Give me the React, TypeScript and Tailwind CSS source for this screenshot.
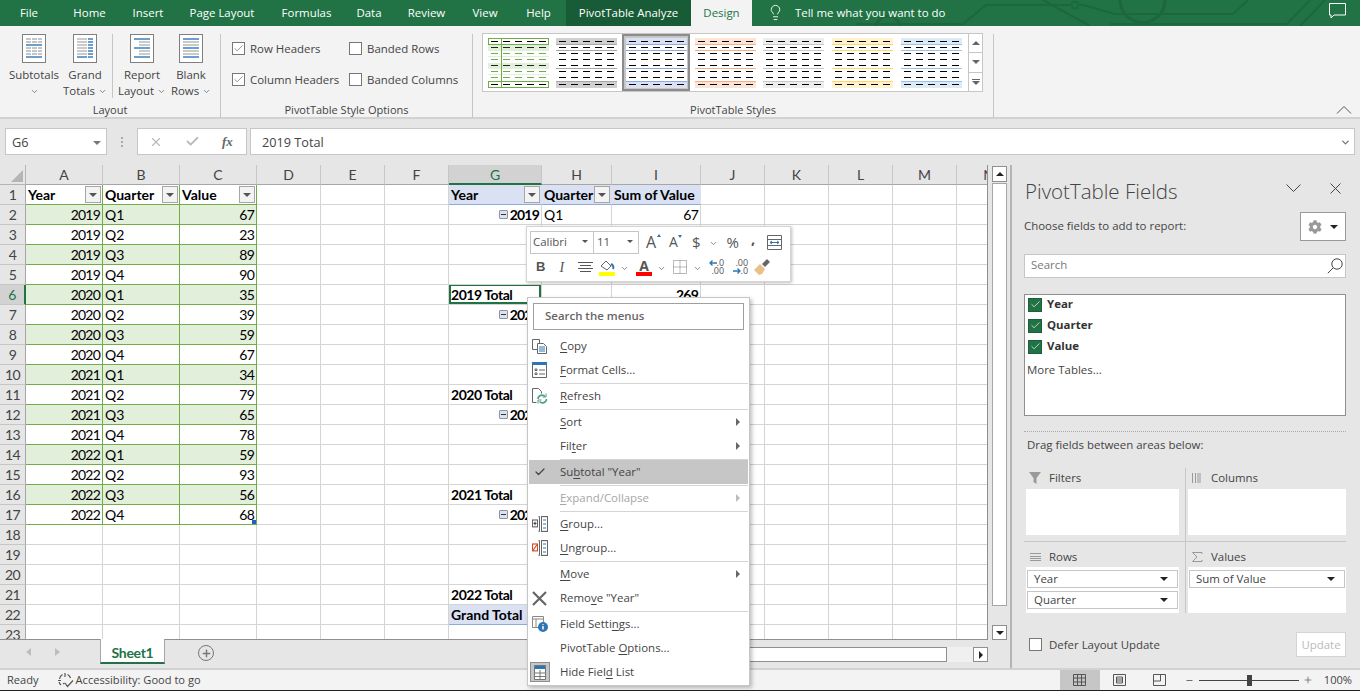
import React from "react";
import { ChevronDown, X, Check, Lightbulb, Plus, Minus } from "lucide-react";
import { FaCog } from "react-icons/fa";

const UI = "font-['Open_Sans','Noto_Sans',sans-serif]";
const CELL = "font-['Lato','Liberation_Sans',sans-serif]";

const TABS = [
    { label: "File", w: "w-[58px]" },
    { label: "Home", w: "w-[63px]" },
    { label: "Insert", w: "w-[54px]" },
    { label: "Page Layout", w: "w-[94px]" },
    { label: "Formulas", w: "w-[75px]" },
    { label: "Data", w: "w-[50px]" },
    { label: "Review", w: "w-[65px]" },
    { label: "View", w: "w-[52px]" },
    { label: "Help", w: "w-[55px]" }
];

const COLS = [
    { name: "A", w: "w-[77px]" },
    { name: "B", w: "w-[77px]" },
    { name: "C", w: "w-[77px]" },
    { name: "D", w: "w-[64px]" },
    { name: "E", w: "w-[64px]" },
    { name: "F", w: "w-[64px]" },
    { name: "G", w: "w-[93px]" },
    { name: "H", w: "w-[70px]" },
    { name: "I", w: "w-[89px]" },
    { name: "J", w: "w-[64px]" },
    { name: "K", w: "w-[64px]" },
    { name: "L", w: "w-[64px]" },
    { name: "M", w: "w-[64px]" },
    { name: "N", w: "w-[64px]" }
];

const SOURCE = [
    [2019, "Q1", 67], [2019, "Q2", 23], [2019, "Q3", 89], [2019, "Q4", 90],
    [2020, "Q1", 35], [2020, "Q2", 39], [2020, "Q3", 59], [2020, "Q4", 67],
    [2021, "Q1", 34], [2021, "Q2", 79], [2021, "Q3", 65], [2021, "Q4", 78],
    [2022, "Q1", 59], [2022, "Q2", 93], [2022, "Q3", 56], [2022, "Q4", 68]
];

const PIVOT: Record<number, [string, string, string, string]> = {
    2: ["group", "2019", "Q1", "67"], 3: ["", "", "Q2", "23"], 4: ["", "", "Q3", "89"], 5: ["", "", "Q4", "90"],
    6: ["total", "2019 Total", "", "269"],
    7: ["group", "2020", "Q1", "35"], 8: ["", "", "Q2", "39"], 9: ["", "", "Q3", "59"], 10: ["", "", "Q4", "67"],
    11: ["total", "2020 Total", "", "200"],
    12: ["group", "2021", "Q1", "34"], 13: ["", "", "Q2", "79"], 14: ["", "", "Q3", "65"], 15: ["", "", "Q4", "78"],
    16: ["total", "2021 Total", "", "256"],
    17: ["group", "2022", "Q1", "59"], 18: ["", "", "Q2", "93"], 19: ["", "", "Q3", "56"], 20: ["", "", "Q4", "68"],
    21: ["total", "2022 Total", "", "276"],
    22: ["grand", "Grand Total", "", "1001"]
};

function Circuit() {
    return (
        <svg className="absolute top-0 right-0 pointer-events-none" width="520" height="26" viewBox="0 0 520 26" fill="none" stroke="#1c673d" strokeWidth="2">
            <path d="M16 24H123L146 5H230M240 5H243L275 14H393L408 0" />
            <circle cx="235" cy="5" r="3.5" />
            <path d="M203 0L250 26M270 24H447L470 0M460 26L485 0" />
            <path d="M280 0A22 22 0 0 0 325 0" strokeWidth="3" />
            <path d="M36 28A12 12 0 0 1 60 28" strokeWidth="3" />
        </svg>
    );
}

function DocIcon({ kind }: { kind: number }) {
    // four little report-layout sheets, told apart by where the blue lines sit
    const rows = [5, 8, 11, 14, 17, 20, 23];
    return (
        <svg width="24" height="29" viewBox="0 0 24 29" className="block">
            <rect x="0.5" y="0.5" width="23" height="28" fill="#fff" stroke="#7f7f7f" />
            {rows.map((y, i) => {
                const blue = kind === 0 ? i === 2 || i === 6 : kind === 1 ? i === 6 : kind === 2 ? i === 0 || i === 3 || i === 6 : i % 3 === 0;
                if (kind === 1) {
                    return (
                        <g key={y}>
                            <path d={`M4 ${y}H14`} stroke={blue ? "#2e75b6" : "#b3b3b3"} strokeWidth="1.4" />
                            <path d={`M15 ${y}H20`} stroke="#2e75b6" strokeWidth="1.4" />
                        </g>
                    );
                }
                if (kind === 2) {
                    return <path key={y} d={`M${blue ? 4 : 9} ${y}H20`} stroke={blue ? "#2e75b6" : "#b3b3b3"} strokeWidth="1.4" />;
                }
                return <path key={y} d={`M4 ${y}H20`} stroke={blue ? "#2e75b6" : "#b3b3b3"} strokeWidth="1.4" strokeDasharray={kind === 0 && !blue ? "5 1" : undefined} />;
            })}
        </svg>
    );
}

function Caret({ className = "" }: { className?: string }) {
    return <ChevronDown className={`inline-block h-[9px] w-[9px] text-[#666] ${className}`} strokeWidth={2} />;
}

function RibbonBtn({ kind, top, bottom, w }: { kind: number; top: string; bottom?: string; w: string }) {
    return (
        <div className={`flex flex-col items-center ${w} text-[11.45px] leading-[16px] text-[#444]`}>
            <DocIcon kind={kind} />
            <div className="mt-[4px] whitespace-nowrap">{top}</div>
            <div className="whitespace-nowrap">
                {bottom} <Caret />
            </div>
        </div>
    );
}

function Box({ checked, label }: { checked?: boolean; label: string }) {
    return (
        <div className="flex h-[31px] items-center gap-[5px] whitespace-nowrap text-[11.45px] text-[#444]">
            <div className="flex h-[13px] w-[13px] items-center justify-center border border-[#777] bg-white">
                {checked && <Check className="h-[11px] w-[11px] text-[#666]" strokeWidth={1.5} />}
            </div>
            {label}
        </div>
    );
}

function Thumb({ band, line, first }: { band: string; line: string; first?: boolean }) {
    const ys = [3.5, 9.5, 15.5, 21.5, 27.5, 33.5, 39.5, 46.5];
    const xs = [3, 15, 27, 39, 51];
    if (first) {
        return (
            <svg width="61" height="50" viewBox="0 0 61 50" className="block">
                <rect x="0" y="7" width="61" height="6" fill="#e2efda" />
                <rect x="0" y="25" width="61" height="6" fill="#e2efda" />
                <path d="M0 18.5H61M0 36.5H61" stroke="#e2efda" />
                {ys.map((y, i) =>
                    xs.map((x) => (
                        <path key={`${y}-${x}`} d={`M${x} ${y}h7`} stroke={i === 0 || i === 7 ? "#000" : i === 1 || i === 4 ? "#222" : "#70ad47"} strokeWidth="1" />
                    ))
                )}
                <path d="M13.5 0V50" stroke="#70ad47" />
                <rect x="0.5" y="0.5" width="60" height="6" fill="none" stroke="#70ad47" />
                <rect x="0.5" y="43.5" width="60" height="6" fill="none" stroke="#70ad47" />
            </svg>
        );
    }
    return (
        <svg width="61" height="50" viewBox="0 0 61 50" className="block">
            <rect x="0" y="0" width="61" height="6" fill={band} />
            <rect x="0" y="44" width="61" height="6" fill={band} />
            <path d="M0 6.5H61M0 12.5H61M0 30.5H61M0 43.5H61" stroke={line} />
            {ys.map((y) =>
                xs.map((x) => <path key={`${y}-${x}`} d={`M${x} ${y}h7`} stroke="#000" strokeWidth="1" />)
            )}
        </svg>
    );
}

function Ribbon() {
    return (
        <div className={`${UI} flex h-[93px] border-b-2 border-[#d2d2d2] bg-[#f3f3f3] pt-[8px]`}>
            <div className="relative h-[84px] w-[221px] border-r border-[#c6c6c6]">
                <div className="flex">
                    <RibbonBtn kind={0} top="Subtotals" w="w-[68px]" />
                    <RibbonBtn kind={1} top="Grand" bottom="Totals" w="w-[34px]" />
                    <div className="ml-[10px] h-[64px] w-px bg-[#c6c6c6]" />
                    <RibbonBtn kind={2} top="Report" bottom="Layout" w="w-[58px]" />
                    <RibbonBtn kind={3} top="Blank" bottom="Rows" w="w-[40px]" />
                </div>
                <div className="absolute bottom-[0px] w-full text-center text-[11px] leading-[16px] text-[#444]">Layout</div>
            </div>
            <div className="relative h-[84px] w-[252px] border-r border-[#c6c6c6] pl-[11px]">
                <div className="-mt-px flex">
                    <div className="flex w-[117px] flex-col">
                        <Box checked label="Row Headers" />
                        <Box checked label="Column Headers" />
                    </div>
                    <div className="flex flex-col">
                        <Box label="Banded Rows" />
                        <Box label="Banded Columns" />
                    </div>
                </div>
                <div className="absolute bottom-[0px] left-0 w-full text-center text-[11px] leading-[16px] text-[#444]">PivotTable Style Options</div>
            </div>
            <div className="relative h-[84px] w-[521px] border-r border-[#c6c6c6] pl-[9px]">
                <div className="-mt-px flex h-[59px] w-[501px] border border-[#c6c6c6] bg-white pl-[5px]">
                    <div className="flex items-center gap-[7px]">
                        <Thumb first band="" line="" />
                        <Thumb band="#d0d0d0" line="#a6a6a6" />
                        <div className="-mx-[2px] flex h-[57px] w-[68px] items-center justify-center border-2 border-[#8c8c8c] bg-[#c6c6c6]">
                            <div className="bg-white">
                                <Thumb band="#d9e1f2" line="#8ea9db" />
                            </div>
                        </div>
                        <Thumb band="#fce4d6" line="#f4b084" />
                        <Thumb band="#ededed" line="#c9c9c9" />
                        <div className="ml-px">
                            <Thumb band="#fff2cc" line="#ffd966" />
                        </div>
                        <div className="ml-px">
                            <Thumb band="#ddebf7" line="#9bc2e6" />
                        </div>
                    </div>
                    <div className="ml-auto flex w-[14px] flex-col border-l border-[#c6c6c6]">
                        <div className="flex flex-1 items-center justify-center border-b border-[#c6c6c6]"><div className="h-0 w-0 border-x-[4px] border-b-[4px] border-x-transparent border-b-[#666]" /></div>
                        <div className="flex flex-1 items-center justify-center border-b border-[#c6c6c6]"><div className="h-0 w-0 border-x-[4px] border-t-[4px] border-x-transparent border-t-[#666]" /></div>
                        <div className="flex flex-1 flex-col items-center justify-center gap-[1px]"><div className="h-px w-[8px] bg-[#666]" /><div className="h-0 w-0 border-x-[4px] border-t-[4px] border-x-transparent border-t-[#666]" /></div>
                    </div>
                </div>
                <div className="absolute bottom-[0px] left-0 w-full text-center text-[11px] leading-[16px] text-[#444]">PivotTable Styles</div>
            </div>
            <div className="flex flex-1 items-end justify-end pr-[8px] pb-[3px]">
                <svg width="16" height="9" viewBox="0 0 16 9" fill="none" stroke="#555"><path d="M1 8.5L8 1.5L15 8.5" /></svg>
            </div>
        </div>
    );
}

function FormulaBar() {
    return (
        <div className={`${UI} flex h-[46px] items-start bg-[#e6e6e6] pt-[9px] pl-[5px] pr-[5px]`}>
            <div className="flex h-[27px] w-[102px] items-center justify-between border border-[#c6c6c6] bg-white pt-[2px] pr-[5px] pl-[6px] text-[12.7px] text-[#444]">
                G6
                <div className="h-0 w-0 border-x-[4px] border-t-[4px] border-x-transparent border-t-[#777]" />
            </div>
            <div className="flex h-[27px] w-[30px] flex-col items-center justify-center gap-[2px]">
                <div className="h-[2px] w-[2px] bg-[#aaa]" />
                <div className="h-[2px] w-[2px] bg-[#aaa]" />
                <div className="h-[2px] w-[2px] bg-[#aaa]" />
            </div>
            <div className="flex h-[27px] w-[110px] items-center border border-[#c6c6c6] bg-white text-[#bbb]">
                <X className="ml-[11px] h-[14px] w-[14px]" strokeWidth={2} />
                <Check className="ml-[22px] h-[15px] w-[15px]" strokeWidth={3} />
                <span className="ml-[22px] font-['Liberation_Serif',serif] text-[13px] font-bold italic text-[#666]">fx</span>
            </div>
            <div className="ml-[3px] flex h-[27px] flex-1 items-center justify-between border border-[#c6c6c6] bg-white pt-[2px] pr-[3px] pl-[11px] text-[12.7px] text-[#444]">
                2019 Total
                <ChevronDown className="h-[11px] w-[11px] text-[#777]" strokeWidth={3} />
            </div>
        </div>
    );
}

function FilterBtn() {
    return (
        <div className="absolute top-[1px] right-[1px] flex h-[17px] w-[16px] items-center justify-center border border-[#a6a6a6] bg-[#f3f3f3]">
            <div className="h-0 w-0 border-x-[4px] border-t-[4px] border-x-transparent border-t-[#555]" />
        </div>
    );
}

function Cell({ row, col }: { row: number; col: number }) {
    const base = "relative flex h-full items-center overflow-hidden whitespace-nowrap border-r border-b text-[14px] text-black";
    const w = COLS[col].w;
    // source table A1:C17
    if (col <= 2 && row <= 17) {
        if (row === 1) {
            const label = ["Year", "Quarter", "Value"][col];
            return (
                <div className={`${base} ${w} border-b-[#70ad47] border-r-[#70ad47] pl-[2px] font-bold`}>
                    {label}
                    <FilterBtn />
                </div>
            );
        }
        const v = SOURCE[row - 2][col];
        const band = row % 2 === 0 ? "bg-[#e2efda]" : "bg-white";
        return (
            <div className={`${base} ${w} ${band} border-b-[#70ad47] border-r-[#70ad47] ${col === 1 ? "pl-[2px]" : "justify-end pr-[2px] tracking-[-0.8px]"}`}>
                {v}
                {row === 17 && col === 2 && <div className="absolute right-0 bottom-0 h-[4px] w-[4px] bg-[#1f5fbf]" />}
            </div>
        );
    }
    // pivot table G:I
    if (col >= 6 && col <= 8 && row <= 22) {
        if (row === 1) {
            const label = ["Year", "Quarter", "Sum of Value"][col - 6];
            return (
                <div className={`${base} ${w} border-r-[#d9e1f2] border-b-[#8ea9db] bg-[#d9e1f2] pl-[2px] font-bold`}>
                    {label}
                    {col < 8 && <FilterBtn />}
                </div>
            );
        }
        const [type, a, b, c] = PIVOT[row];
        const grand = type === "grand";
        const grid = grand ? "border-r-[#d9e1f2] border-b-[#8ea9db] bg-[#d9e1f2]" : "border-r-[#d4d4d4] border-b-[#d4d4d4]";
        const topLine = PIVOT[row + 1]?.[0] === "total" || PIVOT[row + 1]?.[0] === "grand" ? "border-b-[#8ea9db]" : "";
        if (col === 6) {
            return (
                <div className={`${base} ${w} ${grid} ${topLine} font-bold ${type === "group" ? "justify-end pr-[2px] tracking-[-0.8px]" : "pl-[2px]"} ${type === "total" ? "tracking-[-0.45px]" : ""}`}>
                    {type === "group" && (
                        <div className="mr-[2px] flex h-[9px] w-[9px] items-center justify-center rounded-[1px] border border-[#8a94a6] bg-[#dde3ee]">
                            <div className="h-px w-[5px] bg-[#333]" />
                        </div>
                    )}
                    {a}
                    {row === 6 && <div className="absolute inset-0 -top-px border-2 border-[#217346]" />}
                </div>
            );
        }
        if (col === 7) {
            return <div className={`${base} ${w} ${grid} ${topLine} pl-[2px]`}>{b}</div>;
        }
        return <div className={`${base} ${w} ${grid} ${topLine} justify-end pr-[2px] tracking-[-0.8px] ${type === "total" || grand ? "font-bold" : ""}`}>{c}</div>;
    }
    return <div className={`${base} ${w} border-r-[#d4d4d4] border-b-[#d4d4d4]`} />;
}

function Sheet() {
    const rows = Array.from({ length: 23 }, (_, i) => i + 1);
    return (
        <div className="flex h-[475px] w-[1010px] bg-[#e6e6e6]">
            <div className="h-full w-[988px] overflow-hidden border-r border-b border-[#8f8f8f] bg-white">
                <div className={`${CELL} flex h-[20px] bg-[#e6e6e6]`}>
                    <div className="flex h-full w-[26px] shrink-0 items-end justify-end border-r border-b border-[#b5b5b5] p-[2px]">
                        <div className="h-0 w-0 border-b-[12px] border-l-[12px] border-b-[#b5b5b5] border-l-transparent" />
                    </div>
                    {COLS.map((c) => (
                        <div
                            key={c.name}
                            className={`flex h-full shrink-0 items-center justify-center border-r border-[#c6c6c6] text-[14px] ${c.w} ${c.name === "G" ? "border-b-2 border-b-[#217346] bg-[#d2d2d2] text-[#217346]" : "border-b border-b-[#a6a6a6] text-[#444]"}`}
                        >
                            {c.name}
                        </div>
                    ))}
                </div>
                {rows.map((r) => (
                    <div key={r} className={`${CELL} flex h-[20px]`}>
                        <div className={`flex h-full w-[26px] shrink-0 items-center justify-center border-b border-[#c6c6c6] text-[14px] tracking-[-0.5px] ${r === 6 ? "border-r-2 border-r-[#217346] bg-[#d2d2d2] text-[#217346]" : "border-r border-r-[#a6a6a6] bg-[#e6e6e6] text-[#444]"}`}>
                            {r}
                        </div>
                        {COLS.map((_, i) => (
                            <div key={i} className={`shrink-0 ${COLS[i].w}`}>
                                <Cell row={r} col={i} />
                            </div>
                        ))}
                    </div>
                ))}
            </div>
            <div className="ml-[4px] flex h-full w-[15px] flex-col pt-px">
                <div className="flex h-[16px] items-center justify-center border border-[#8f8f8f] bg-white">
                    <div className="h-0 w-0 border-x-[4px] border-b-[4px] border-x-transparent border-b-[#222]" />
                </div>
                <div className="mt-px h-[423px] border border-[#a6a6a6] bg-white" />
                <div className="flex-1" />
                <div className="flex h-[15px] items-center justify-center border border-[#8f8f8f] bg-white">
                    <div className="h-0 w-0 border-x-[4px] border-t-[4px] border-x-transparent border-t-[#222]" />
                </div>
            </div>
        </div>
    );
}

function SheetTabs() {
    return (
        <div className="flex h-[28px] w-[1010px] items-start bg-[#e6e6e6]">
            <div className="flex h-[24px] w-[100px] items-center pl-[26px]">
                <div className="h-0 w-0 border-y-[4px] border-r-[5px] border-y-transparent border-r-[#bdbdbd]" />
                <div className="ml-[24px] h-0 w-0 border-y-[4px] border-l-[5px] border-y-transparent border-l-[#bdbdbd]" />
            </div>
            <div className={`${CELL} -mt-px flex h-[25px] w-[65px] items-center justify-center border-x border-b-2 border-x-[#a6a6a6] border-b-[#217346] bg-white pt-[3px] text-[14px] font-bold tracking-[-0.3px] text-[#217346]`}>
                Sheet1
            </div>
            <div className="ml-[33px] mt-[5px] flex h-[16px] w-[16px] items-center justify-center rounded-full border-[1.5px] border-[#777]">
                <Plus className="h-[11px] w-[11px] text-[#777]" strokeWidth={3} />
            </div>
            <div className="ml-[486px] mt-[7px] h-[15px] w-[247px] border border-[#8f8f8f] bg-white" />
            <div className="mt-[7px] h-[15px] w-[26px] bg-[#f0f0f0]" />
            <div className="mt-[7px] flex h-[15px] w-[15px] items-center justify-center border border-[#8f8f8f] bg-white">
                <div className="h-0 w-0 border-y-[4px] border-l-[4px] border-y-transparent border-l-[#222]" />
            </div>
        </div>
    );
}

function FieldCheck({ label }: { label: string }) {
    return (
        <div className="flex h-[21px] items-center gap-[5px] text-[11.45px] font-bold text-[#333]">
            <div className="flex h-[14px] w-[14px] items-center justify-center border border-[#1c5f38] bg-[#217346]">
                <Check className="h-[11px] w-[11px] text-white" strokeWidth={1.5} />
            </div>
            <span className="pb-[2px]">{label}</span>
        </div>
    );
}

function AreaPill({ label }: { label: string }) {
    return (
        <div className="flex h-[18px] items-center justify-between border border-[#c6c6c6] bg-white pr-[9px] pl-[6px] text-[11.45px] text-[#444]">
            {label}
            <div className="h-0 w-0 border-x-[4px] border-t-[4px] border-x-transparent border-t-[#222]" />
        </div>
    );
}

function AreaHead({ icon, label, top }: { icon: React.ReactNode; label: string; top?: boolean }) {
    return (
        <div className={`flex items-center gap-[8px] pl-[3px] text-[11.45px] text-[#444] ${top ? "h-[21px] pb-[2px]" : "h-[20px]"}`}>
            <span className="flex w-[12px] justify-center">{icon}</span>
            {label}
        </div>
    );
}

function FieldPanel() {
    return (
        <div className={`${UI} flex w-[350px] flex-col border-l-2 border-[#b4b4b4] bg-[#e6e6e6] pr-[14px] pl-[12px]`}>
            <div className="flex h-[47px] items-center justify-between pt-[6px] pl-px">
                <div className="text-[20.5px] font-light leading-none text-[#444]">PivotTable Fields</div>
                <div className="mb-[6px] flex items-center">
                    <svg width="15" height="9" viewBox="0 0 15 9" fill="none" stroke="#444"><path d="M.5.5L7.5 7.5L14.5.5" /></svg>
                    <svg width="11" height="11" viewBox="0 0 11 11" fill="none" stroke="#444" className="ml-[29px] mr-[5px]"><path d="M.5.5l10 10M10.5.5l-10 10" /></svg>
                </div>
            </div>
            <div className="flex h-[29px] items-center justify-between">
                <div className="pb-[2px] text-[11.45px] text-[#444]">Choose fields to add to report:</div>
                <div className="flex h-[29px] w-[46px] items-center justify-center gap-[8px] border border-[#999] bg-white">
                    <FaCog className="h-[14px] w-[14px] text-[#999]" />
                    <div className="h-0 w-0 border-x-[4px] border-t-[4px] border-x-transparent border-t-[#222]" />
                </div>
            </div>
            <div className="mt-[13px] flex h-[24px] items-center justify-between border border-[#c6c6c6] bg-white pr-[2px] pl-[6px] text-[11.45px] text-[#777]">
                <span className="pb-[2px]">Search</span>
                <svg width="16" height="16" viewBox="0 0 16 16" fill="none" stroke="#444"><circle cx="10" cy="6" r="5.2" /><path d="M6.2 9.8L.8 15.2" /></svg>
            </div>
            <div className="mt-[16px] h-[122px] border border-[#8f8f8f] bg-white pl-[3px]">
                <div className="-mt-px">
                    <FieldCheck label="Year" />
                    <FieldCheck label="Quarter" />
                    <FieldCheck label="Value" />
                </div>
                <div className="mt-[2px] -ml-px text-[11.45px] leading-[22px] text-[#444]">More Tables...</div>
            </div>
            <div className="mt-[15px] border-t border-dotted border-[#aaa]" />
            <div className="mt-[4px] pl-[3px] text-[11.45px] leading-[18px] text-[#444]">Drag fields between areas below:</div>
            <div className="mt-[14px] flex">
                <div className="w-[162px] border-r border-[#c6c6c6] pr-[6px] pl-[2px]">
                    <AreaHead top icon={<svg width="12" height="12" viewBox="0 0 12 12" fill="#999"><path d="M0 0h12L7.5 6v6L4.5 10V6z" /></svg>} label="Filters" />
                    <div className="h-[46px] bg-white" />
                    <div className="h-[6px]" />
                </div>
                <div className="flex-1 pl-[2px]">
                    <AreaHead top icon={<svg width="10" height="10" viewBox="0 0 10 10" stroke="#999"><path d="M.5 0v10M3.5 0v10M6 0v10M8 0v10" /></svg>} label="Columns" />
                    <div className="h-[46px] bg-white" />
                </div>
            </div>
            <div className="flex border-t border-[#c6c6c6]">
                <div className="w-[162px] border-r border-[#c6c6c6] pr-[6px] pl-[2px] pt-[5px]">
                    <AreaHead icon={<svg width="11" height="9" viewBox="0 0 11 9" stroke="#999"><path d="M0 .5h11M0 3.5h11M0 5.5h11M0 7.5h11" /></svg>} label="Rows" />
                    <div className="flex h-[46px] flex-col gap-[3px] bg-white px-px pt-[3px]">
                        <AreaPill label="Year" />
                        <AreaPill label="Quarter" />
                    </div>
                </div>
                <div className="flex-1 pl-[2px] pt-[5px]">
                    <AreaHead icon={<svg width="11" height="10" viewBox="0 0 11 10" fill="none" stroke="#999"><path d="M10 2V.5H.5L5 5L.5 9.5H10V8" /></svg>} label="Values" />
                    <div className="h-[46px] bg-white px-px pt-[3px]">
                        <AreaPill label="Sum of Value" />
                    </div>
                </div>
            </div>
            <div className="mt-[19px] flex items-center justify-between">
                <div className="flex items-center gap-[7px] pl-[5px] text-[11.45px] text-[#444]">
                    <div className="h-[13px] w-[13px] border border-[#777] bg-white" />
                    Defer Layout Update
                </div>
                <div className="flex h-[25px] w-[50px] items-center justify-center border border-[#d4d4d4] bg-white text-[11.45px] text-[#bbb]">Update</div>
            </div>
        </div>
    );
}

function StatusBar() {
    return (
        <div className={`${UI} flex h-[23px] items-center border-t-2 border-b border-t-[#d2d2d2] border-b-[#222] bg-[#f3f3f3] text-[11.1px] text-[#444]`}>
            <span className="ml-[7px]">Ready</span>
            <svg width="16" height="16" viewBox="0 0 16 16" fill="none" stroke="#555" strokeWidth="1.2" className="ml-[19px]">
                <path d="M7 1v4M4.5 2.5A6 6 0 0 0 1.5 7M1 10a6 6 0 0 0 2 3M9.5 2.5A6 6 0 0 1 12.5 6" />
                <path d="M0 8.5h3M5 12l1.5-1M7 11l2.5 3.5L15 8.5" />
            </svg>
            <span className="ml-[2px]">Accessibility: Good to go</span>
            <div className="ml-auto flex h-full items-center">
                <div className="flex h-full w-[40px] items-center justify-center bg-[#c6c6c6]">
                    <svg width="13" height="12" viewBox="0 0 13 12" fill="none" stroke="#555"><path d="M.5.5h12v11H.5zM.5 4h12M.5 8h12M4.5.5v11M8.5.5v11" /></svg>
                </div>
                <div className="flex w-[40px] justify-center">
                    <svg width="13" height="12" viewBox="0 0 13 12" fill="none" stroke="#555"><path d="M.5.5h12v11H.5zM3.5 3h6v6h-6zM4 5h5M4 7h5" /></svg>
                </div>
                <div className="flex w-[40px] justify-center">
                    <svg width="13" height="12" viewBox="0 0 13 12" fill="none" stroke="#555"><path d="M.5.5h12v11H.5zM.5 7h7V.5" /></svg>
                </div>
                <Minus className="ml-[5px] h-[9px] w-[9px] text-[#444]" strokeWidth={2} />
                <div className="relative ml-[5px] h-px w-[100px] bg-[#444]">
                    <div className="absolute top-[-5px] left-[48px] h-[11px] w-[5px] bg-[#444]" />
                </div>
                <Plus className="ml-[4px] h-[10px] w-[10px] text-[#444]" strokeWidth={1.5} />
                <span className="ml-[11px] mr-[8px]">100%</span>
            </div>
        </div>
    );
}

function MenuSep() {
    return <div className="ml-[31px] h-[2px] border-b border-[#d4d4d4]" />;
}

function MenuItem({ icon, hot, pre, post, arrow, active, disabled }: { icon?: React.ReactNode; pre: string; hot: string; post: string; arrow?: boolean; active?: boolean; disabled?: boolean }) {
    return (
        <div className={`flex h-[24px] items-center whitespace-nowrap text-[11.45px] ${active ? "bg-[#c6c6c6]" : ""} ${disabled ? "text-[#a6a6a6]" : "text-[#444]"}`}>
            <div className="flex w-[31px] shrink-0 items-center justify-start pl-[3px]">{icon}</div>
            <span>
                {pre}
                <u className="underline-offset-2">{hot}</u>
                {post}
            </span>
            {arrow && <div className={`ml-auto mr-[8px] h-0 w-0 border-y-[4px] border-l-[4px] border-y-transparent ${disabled ? "border-l-[#bbb]" : "border-l-[#666]"}`} />}
        </div>
    );
}

const GroupIcon = ({ red }: { red?: boolean }) => (
    <svg width="16" height="16" viewBox="0 0 16 14" fill="none" preserveAspectRatio="none">
        <rect x="0.5" y="3.5" width="5" height="6" fill="#fff" stroke={red ? "#d24726" : "#666"} />
        {red ? <path d="M1 9L5 4" stroke="#d24726" /> : <path d="M1.5 6.5h3M3 5v3" stroke="#444" />}
        <path d="M7.5.5v13M7.5.5h-1M7.5 13.5h-1" stroke="#666" />
        <rect x="9.5" y=".5" width="6" height="13" fill="#fff" stroke="#666" />
        <path d="M11 3.5h3M11 7h3M11 10.5h3" stroke="#2e75b6" />
    </svg>
);

function ContextMenu() {
    return (
        <div className={`${UI} absolute top-[297px] left-[527px] h-[389px] w-[223px] border border-[#c6c6c6] bg-white pr-[1px] pl-[1px] shadow-[2px_2px_4px_rgba(0,0,0,0.25)]`}>
            <div className="mx-[4px] mt-[5px] mb-[4px] flex h-[27px] items-center border border-[#a0a0a0] pb-[2px] pl-[11px] text-[11.45px] font-semibold text-[#666]">Search the menus</div>
            <MenuItem pre="" hot="C" post="opy" icon={
                <svg width="16" height="15" viewBox="0 0 16 15" fill="none" stroke="#666"><path d="M.5.5h7v10h-7z" /><path d="M5.5 4.5h6l3 3v7h-9z" fill="#fff" /><path d="M7 8h6M7 10h6M7 12h6" stroke="#2e75b6" /></svg>
            } />
            <MenuItem pre="" hot="F" post="ormat Cells..." icon={
                <svg width="15" height="16" viewBox="0 0 15 16" fill="none" stroke="#666"><path d="M.5.5h14v15H.5z" fill="#fff" /><rect x="0" y="0" width="15" height="3" fill="#2e75b6" stroke="none" /><path d="M3 7h2v1.5H3zM3 11h2v1.5H3zM7 8h6M7 12h6" /></svg>
            } />
            <MenuSep />
            <MenuItem pre="" hot="R" post="efresh" icon={
                <svg width="16" height="16" viewBox="0 0 16 16" fill="none"><path d="M4.5 14.5H.5V.5h6l3 3v2" stroke="#666" /><path d="M6 11a4 4 0 0 1 7-2.5M14.5 11a4 4 0 0 1-7 2.5" stroke="#4ea37a" strokeWidth="1.6" /><path d="M14 5.5v3.5h-3.5M6 15.5V12h3.5" stroke="#4ea37a" /></svg>
            } />
            <MenuSep />
            <MenuItem pre="" hot="S" post="ort" arrow />
            <MenuItem pre="Fil" hot="t" post="er" arrow />
            <MenuSep />
            <MenuItem pre="Su" hot="b" post={'total "Year"'} active icon={<Check className="ml-[2px] h-[12px] w-[12px] text-[#444]" strokeWidth={2.5} />} />
            <MenuSep />
            <MenuItem pre="" hot="E" post="xpand/Collapse" arrow disabled />
            <MenuSep />
            <MenuItem pre="" hot="G" post="roup..." icon={<GroupIcon />} />
            <MenuItem pre="" hot="U" post="ngroup..." icon={<GroupIcon red />} />
            <MenuSep />
            <MenuItem pre="" hot="M" post="ove" arrow />
            <MenuItem pre="Remo" hot="v" post={'e "Year"'} icon={
                <svg width="15" height="15" viewBox="0 0 15 15" stroke="#666" strokeWidth="2.2"><path d="M1 1l13 13M14 1L1 14" /></svg>
            } />
            <MenuSep />
            <MenuItem pre="Field Setti" hot="n" post="gs..." icon={
                <svg width="16" height="16" viewBox="0 0 16 16" fill="none" stroke="#888"><path d="M.5.5h11v11H.5zM.5 3h11M4 3v8.5" /><circle cx="11" cy="11" r="5" fill="#2e75b6" stroke="none" /><path d="M11 8v.8M11 10v3.5" stroke="#fff" strokeWidth="1.5" /></svg>
            } />
            <MenuItem pre="PivotTable " hot="O" post="ptions..." />
            <div className="flex h-[24px] items-center whitespace-nowrap text-[11.45px] text-[#444]">
                <div className="ml-px mr-[10px] flex h-[20px] w-[20px] shrink-0 items-center justify-center border border-[#8f8f8f] bg-[#c6c6c6]">
                    <svg width="12" height="15" viewBox="0 0 12 15" fill="none"><path d="M.5.5h11v14H.5z" fill="#fff" stroke="#777" /><rect x="1" y="1" width="10" height="3" fill="#2e75b6" /><path d="M1 8h10M1 11.5h10M6 5v9" stroke="#777" /></svg>
                </div>
                <span>Hide Fiel<u className="underline-offset-2">d</u> List</span>
            </div>
        </div>
    );
}

function DecimalIcon({ grow }: { grow?: boolean }) {
    return (
        <div className="relative h-[16px] w-[15px] text-[9px] leading-[8px]">
            <span className="absolute top-0 right-0">{grow ? ".00" : ".0"}</span>
            <span className="absolute right-0 bottom-0">{grow ? ".0" : ".00"}</span>
            <svg width="8" height="6" viewBox="0 0 8 6" fill="none" stroke="#2e75b6" strokeWidth="1.3" className={`absolute left-0 ${grow ? "bottom-px" : "top-px"}`}>
                {grow ? <path d="M0 3h7M4.5 .5L7 3L4.5 5.5" /> : <path d="M8 3H1M3.5 .5L1 3L3.5 5.5" />}
            </svg>
        </div>
    );
}

function MiniToolbar() {
    const caret = <Caret className="text-[#555]" />;
    return (
        <div className={`${UI} absolute top-[226px] left-[526px] h-[56px] w-[265px] border border-[#d4d4d4] bg-white p-[3px] shadow-[1px_1px_3px_rgba(0,0,0,0.25)]`}>
            <div className="flex h-[24px] items-center text-[#555]">
                <div className="flex h-[23px] w-[64px] items-center justify-between border border-[#c6c6c6] pr-[5px] pb-px pl-[2px] text-[11.45px]">
                    Calibri
                    <div className="h-0 w-0 border-x-[3px] border-t-[3px] border-x-transparent border-t-[#555]" />
                </div>
                <div className="flex h-[23px] w-[45px] items-center justify-between border border-l-0 border-[#c6c6c6] pr-[5px] pb-px pl-[3px] text-[11.45px]">
                    11
                    <div className="h-0 w-0 border-x-[3px] border-t-[3px] border-x-transparent border-t-[#555]" />
                </div>
                <div className="relative ml-[7px] w-[14px] text-[16px] leading-none">A<div className="absolute top-0 right-[-1px] h-0 w-0 border-x-[2.5px] border-b-[3px] border-x-transparent border-b-[#2e75b6]" /></div>
                <div className="relative ml-[9px] w-[13px] text-[14px] leading-none">A<div className="absolute top-0 right-[0px] h-0 w-0 border-x-[2.5px] border-t-[3px] border-x-transparent border-t-[#2e75b6]" /></div>
                <span className="ml-[10px] text-[15px]">$</span>
                <span className="ml-[8px]">{caret}</span>
                <span className="ml-[9px] text-[15px]">%</span>
                <span className="ml-[12px] pb-[7px] text-[15px] font-bold">,</span>
                <svg width="15" height="15" viewBox="0 0 15 15" fill="none" stroke="#666" className="ml-[12px]"><path d="M.5.5h14v14H.5zM.5 4.5h14M.5 10.5h14" /><path d="M3 7.5h9M3 7.5l2-1.5M3 7.5l2 1.5M12 7.5l-2-1.5M12 7.5l-2 1.5" stroke="#2e75b6" /></svg>
            </div>
            <div className="mt-[1px] flex h-[24px] items-center text-[#555]">
                <span className="ml-[6px] font-['Liberation_Sans',sans-serif] text-[13px] font-bold">B</span>
                <span className="ml-[14px] font-['Liberation_Serif',serif] text-[14px] italic">I</span>
                <svg width="15" height="11" viewBox="0 0 15 11" stroke="#555" className="ml-[14px]"><path d="M0 .5h15M2 3.5h11M0 6.5h15M2 9.5h11" /></svg>
                <svg width="16" height="18" viewBox="0 0 16 18" fill="none" className="ml-[6px]"><path d="M2 8l5-5 5 5-4 4z" stroke="#666" fill="#fff" /><path d="M12 6c2 1 3 3 2 5" stroke="#2e75b6" strokeWidth="2" /><rect x="0" y="14" width="16" height="4" fill="#ffff00" /></svg>
                <span className="ml-[5px]">{caret}</span>
                <div className="relative ml-[7px] flex h-[18px] w-[16px] flex-col items-center text-[14px] font-bold leading-[15px]">A<div className="absolute bottom-0 h-[4px] w-[16px] bg-[#ff0000]" /></div>
                <span className="ml-[5px]">{caret}</span>
                <svg width="14" height="14" viewBox="0 0 14 14" fill="none" stroke="#777" strokeDasharray="1 1" className="ml-[7px]"><path d="M.5.5h13v13H.5zM.5 7h13M7 .5v13" /></svg>
                <span className="ml-[6px]">{caret}</span>
                <div className="ml-[7px]"><DecimalIcon /></div>
                <div className="ml-[9px]"><DecimalIcon grow /></div>
                <svg width="16" height="16" viewBox="0 0 16 16" className="ml-[6px]"><path d="M0 11l6-6 5 5-3 5-3 1-2-2z" fill="#e9c08a" /><path d="M8 5l5-5 3 3-5 5z" fill="#666" /></svg>
            </div>
        </div>
    );
}

export default function App() {
    return (
        <div className="relative h-[691px] w-[1360px] overflow-hidden bg-[#e6e6e6]">
            <div className={`${UI} relative flex h-[26px] items-stretch overflow-hidden bg-[#217346] text-[11.45px] text-white`}>
                <Circuit />
                {TABS.map((t) => (
                    <div key={t.label} className={`relative flex shrink-0 items-center justify-center pb-px ${t.w}`}>{t.label}</div>
                ))}
                <div className="relative flex w-[125px] items-center justify-center bg-[#185c37] pb-px">PivotTable Analyze</div>
                <div className="relative flex w-[61px] items-center justify-center bg-[#f3f3f3] pb-px text-[#217346]">Design</div>
                <div className="relative ml-[15px] flex items-center pb-px">
                    <Lightbulb className="h-[17px] w-[17px]" strokeWidth={1.25} />
                    <span className="ml-[11px]">Tell me what you want to do</span>
                </div>
                <svg width="17" height="16" viewBox="0 0 17 16" fill="none" stroke="#fff" className="absolute top-[3px] right-[14px]"><path d="M.5.5h16v11.5H5l-3 3v-3H.5z" /></svg>
            </div>
            <Ribbon />
            <FormulaBar />
            <div className="flex">
                <div className="flex flex-col">
                    <Sheet />
                    <SheetTabs />
                </div>
                <FieldPanel />
            </div>
            <StatusBar />
            <MiniToolbar />
            <ContextMenu />
        </div>
    );
}
